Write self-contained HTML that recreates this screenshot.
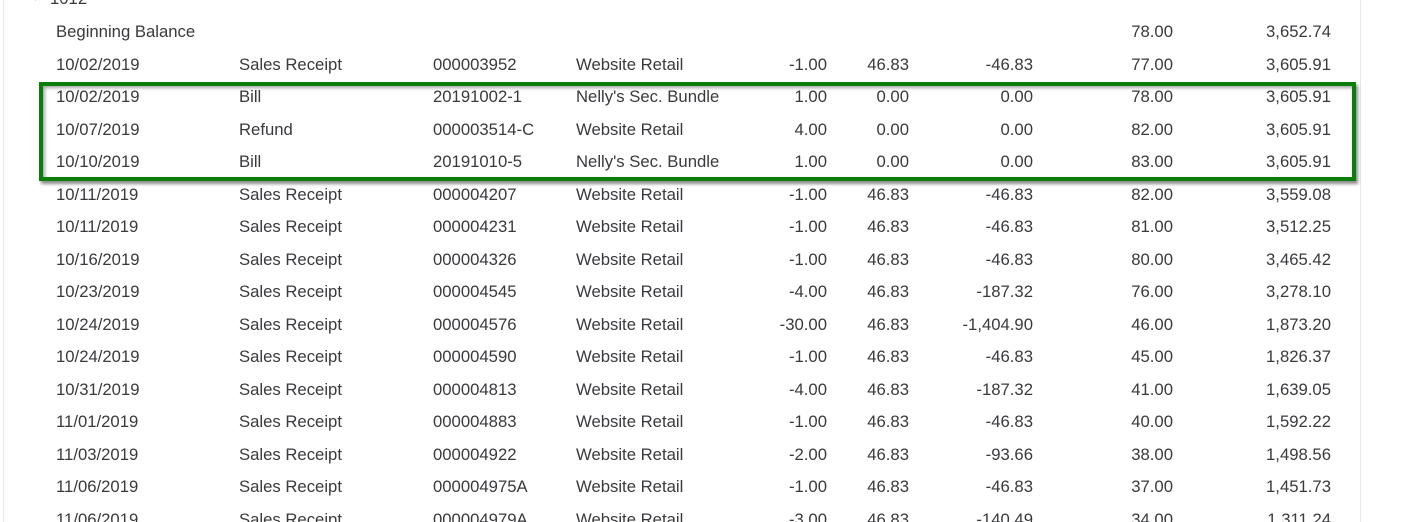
<!DOCTYPE html>
<html><head><meta charset="utf-8"><style>
html,body{margin:0;padding:0;background:#fff;width:1420px;height:522px;overflow:hidden;position:relative;font-family:"Liberation Sans",Arial,sans-serif;font-size:16.7px;color:#393a3d}
.vl{position:absolute;top:0;bottom:0;width:1px;background:#e3e8f2}
.r{position:absolute;left:0;width:1420px;height:20px;line-height:20px}
.r span{position:absolute;white-space:nowrap}
.a{left:56px}.b{left:239px}.c{left:433px}.d{left:576px}
.e,.f,.g,.h,.i{text-align:right;width:150px}
.e{left:677px}.f{left:759px}.g{left:883px}.h{left:1023px}.i{left:1181px}
.box{position:absolute;left:39px;top:82px;width:1309px;height:91px;border:4px solid #0a7d0a;box-shadow:2px 3px 3px rgba(0,0,0,.45), inset 2px 2px 3px rgba(0,0,0,.35)}
</style></head><body>
<div class="vl" style="left:3px"></div>
<div class="vl" style="left:1360px"></div>
<div class="r" style="top:-11px"><span style="left:33px;font-size:10px;color:#8d9096">&#9662;</span><span style="left:50px">1012</span></div>
<div class="r" style="top:22px"><span class="a">Beginning Balance</span><span class="h">78.00</span><span class="i">3,652.74</span></div>
<div class="r" style="top:55px"><span class="a">10/02/2019</span><span class="b">Sales Receipt</span><span class="c">000003952</span><span class="d">Website Retail</span><span class="e">-1.00</span><span class="f">46.83</span><span class="g">-46.83</span><span class="h">77.00</span><span class="i">3,605.91</span></div>
<div class="r" style="top:87px"><span class="a">10/02/2019</span><span class="b">Bill</span><span class="c">20191002-1</span><span class="d">Nelly's Sec. Bundle</span><span class="e">1.00</span><span class="f">0.00</span><span class="g">0.00</span><span class="h">78.00</span><span class="i">3,605.91</span></div>
<div class="r" style="top:120px"><span class="a">10/07/2019</span><span class="b">Refund</span><span class="c">000003514-C</span><span class="d">Website Retail</span><span class="e">4.00</span><span class="f">0.00</span><span class="g">0.00</span><span class="h">82.00</span><span class="i">3,605.91</span></div>
<div class="r" style="top:152px"><span class="a">10/10/2019</span><span class="b">Bill</span><span class="c">20191010-5</span><span class="d">Nelly's Sec. Bundle</span><span class="e">1.00</span><span class="f">0.00</span><span class="g">0.00</span><span class="h">83.00</span><span class="i">3,605.91</span></div>
<div class="r" style="top:185px"><span class="a">10/11/2019</span><span class="b">Sales Receipt</span><span class="c">000004207</span><span class="d">Website Retail</span><span class="e">-1.00</span><span class="f">46.83</span><span class="g">-46.83</span><span class="h">82.00</span><span class="i">3,559.08</span></div>
<div class="r" style="top:217px"><span class="a">10/11/2019</span><span class="b">Sales Receipt</span><span class="c">000004231</span><span class="d">Website Retail</span><span class="e">-1.00</span><span class="f">46.83</span><span class="g">-46.83</span><span class="h">81.00</span><span class="i">3,512.25</span></div>
<div class="r" style="top:250px"><span class="a">10/16/2019</span><span class="b">Sales Receipt</span><span class="c">000004326</span><span class="d">Website Retail</span><span class="e">-1.00</span><span class="f">46.83</span><span class="g">-46.83</span><span class="h">80.00</span><span class="i">3,465.42</span></div>
<div class="r" style="top:282px"><span class="a">10/23/2019</span><span class="b">Sales Receipt</span><span class="c">000004545</span><span class="d">Website Retail</span><span class="e">-4.00</span><span class="f">46.83</span><span class="g">-187.32</span><span class="h">76.00</span><span class="i">3,278.10</span></div>
<div class="r" style="top:315px"><span class="a">10/24/2019</span><span class="b">Sales Receipt</span><span class="c">000004576</span><span class="d">Website Retail</span><span class="e">-30.00</span><span class="f">46.83</span><span class="g">-1,404.90</span><span class="h">46.00</span><span class="i">1,873.20</span></div>
<div class="r" style="top:347px"><span class="a">10/24/2019</span><span class="b">Sales Receipt</span><span class="c">000004590</span><span class="d">Website Retail</span><span class="e">-1.00</span><span class="f">46.83</span><span class="g">-46.83</span><span class="h">45.00</span><span class="i">1,826.37</span></div>
<div class="r" style="top:380px"><span class="a">10/31/2019</span><span class="b">Sales Receipt</span><span class="c">000004813</span><span class="d">Website Retail</span><span class="e">-4.00</span><span class="f">46.83</span><span class="g">-187.32</span><span class="h">41.00</span><span class="i">1,639.05</span></div>
<div class="r" style="top:412px"><span class="a">11/01/2019</span><span class="b">Sales Receipt</span><span class="c">000004883</span><span class="d">Website Retail</span><span class="e">-1.00</span><span class="f">46.83</span><span class="g">-46.83</span><span class="h">40.00</span><span class="i">1,592.22</span></div>
<div class="r" style="top:445px"><span class="a">11/03/2019</span><span class="b">Sales Receipt</span><span class="c">000004922</span><span class="d">Website Retail</span><span class="e">-2.00</span><span class="f">46.83</span><span class="g">-93.66</span><span class="h">38.00</span><span class="i">1,498.56</span></div>
<div class="r" style="top:477px"><span class="a">11/06/2019</span><span class="b">Sales Receipt</span><span class="c">000004975A</span><span class="d">Website Retail</span><span class="e">-1.00</span><span class="f">46.83</span><span class="g">-46.83</span><span class="h">37.00</span><span class="i">1,451.73</span></div>
<div class="r" style="top:510px"><span class="a">11/06/2019</span><span class="b">Sales Receipt</span><span class="c">000004979A</span><span class="d">Website Retail</span><span class="e">-3.00</span><span class="f">46.83</span><span class="g">-140.49</span><span class="h">34.00</span><span class="i">1,311.24</span></div>
<div class="box"></div>
</body></html>
